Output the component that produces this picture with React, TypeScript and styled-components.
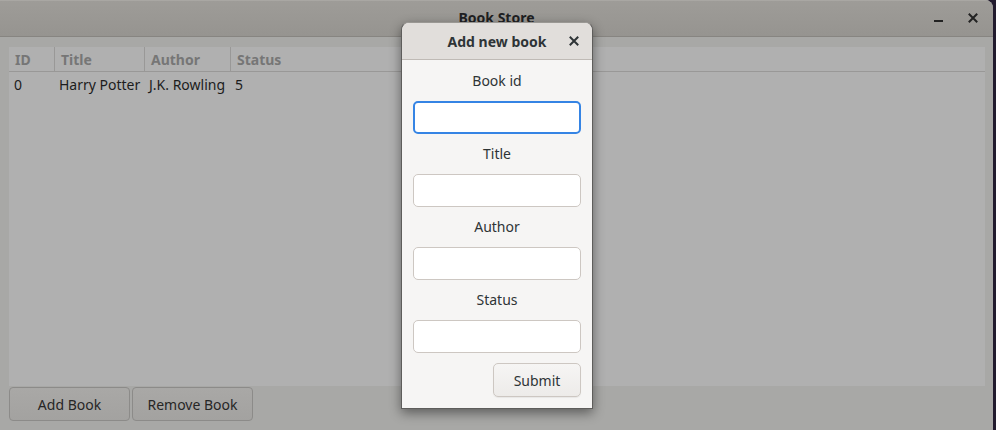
import React from "react";
import styled, { createGlobalStyle } from "styled-components";

const GlobalStyle = createGlobalStyle`
  html, body { margin: 0; padding: 0; }
  body {
    background: #221b2e;
    font-family: "Noto Sans", "Open Sans", sans-serif;
    font-size: 14px;
    overflow: hidden;
  }
`;

const Screen = styled.div`
  position: relative;
  width: 996px;
  height: 430px;
  overflow: hidden;
`;

const Win = styled.div`
  width: 993px;
  height: 430px;
  background: #a8a8a6;
  border-top-right-radius: 8px;
  display: flex;
  flex-direction: column;
  overflow: hidden;
`;

const HeaderBar = styled.div`
  height: 36px;
  flex: none;
  display: flex;
  align-items: center;
  background: linear-gradient(#9e9c98, #969490);
  border-bottom: 1px solid #878581;
  box-shadow: inset 0 1px 0 #a9a7a3;
`;

const Side = styled.div<{ $end?: boolean }>`
  flex: 1;
  display: flex;
  justify-content: ${(p) => (p.$end ? "flex-end" : "flex-start")};
  align-items: center;
  gap: 18px;
  padding-right: 12px;
`;

const WinTitle = styled.div`
  font-weight: bold;
  color: #1e2022;
  font-size: 14px;
  margin-top: -2px;
`;

const CtrlBtn = styled.div`
  width: 16px;
  height: 16px;
  display: flex;
  align-items: center;
  justify-content: center;
`;

const Content = styled.div`
  flex: 1;
  display: flex;
  flex-direction: column;
  padding: 10px 8px 0 9px;
`;

const Table = styled.div`
  height: 339px;
  background: #b0b0b0;
  display: flex;
  flex-direction: column;
`;

const HeadRow = styled.div`
  height: 24px;
  display: flex;
  border-bottom: 1px solid #999897;
`;

const HeadCell = styled.div<{ $w?: number; $first?: boolean }>`
  ${(p) => (p.$w ? `width: ${p.$w}px;` : "flex: 1;")}
  box-sizing: border-box;
  border-left: ${(p) => (p.$first ? "none" : "1px solid #999897")};
  padding-left: 6px;
  display: flex;
  align-items: center;
  font-weight: bold;
  color: #767676;
`;

const Row = styled.div`
  height: 24px;
  display: flex;
`;

const Cell = styled.div<{ $w?: number }>`
  ${(p) => (p.$w ? `width: ${p.$w}px;` : "flex: 1;")}
  box-sizing: border-box;
  padding-left: 5px;
  display: flex;
  align-items: center;
  color: #1c1c1c;
  white-space: nowrap;
`;

const ButtonRow = styled.div`
  display: flex;
  gap: 2px;
  margin-top: 1px;
`;

const WinButton = styled.div`
  width: 121px;
  height: 34px;
  box-sizing: border-box;
  border: 1px solid #8c8b89;
  border-radius: 4px;
  background: linear-gradient(#a9a8a6, #a3a2a0);
  display: flex;
  align-items: center;
  justify-content: center;
  color: #262626;
`;

const Dialog = styled.div`
  position: absolute;
  left: 401px;
  top: 22px;
  width: 192px;
  height: 387px;
  box-sizing: border-box;
  border: 1px solid #5e5d5b;
  border-top-color: #9a9894;
  border-radius: 8px 8px 0 0;
  background: #f6f5f4;
  box-shadow: 0 4px 12px rgba(0, 0, 0, 0.45);
  display: flex;
  flex-direction: column;
  overflow: hidden;
`;

const DlgHeader = styled.div`
  height: 36px;
  flex: none;
  background: #e1dedb;
  border-bottom: 1px solid #bfbab5;
  display: flex;
  align-items: center;
  justify-content: center;
  position: relative;
`;

const DlgTitle = styled.div`
  font-weight: bold;
  color: #2e3436;
`;

const DlgClose = styled.div`
  position: absolute;
  right: 13px;
  top: 13px;
  width: 10px;
  height: 10px;
  display: flex;
`;

const DlgBody = styled.div`
  flex: 1;
  display: flex;
  flex-direction: column;
  align-items: stretch;
  gap: 10px;
  padding: 11px 11px 0 11px;
`;

const Label = styled.div`
  height: 20px;
  line-height: 20px;
  text-align: center;
  color: #2e3436;
`;

const Input = styled.div<{ $focus?: boolean }>`
  height: 33px;
  box-sizing: border-box;
  background: #fff;
  border-radius: 5px;
  border: ${(p) => (p.$focus ? "2px solid #3584e4" : "1px solid #cdc7c2")};
`;

const SubmitRow = styled.div`
  display: flex;
  justify-content: flex-end;
`;

const Submit = styled.div`
  width: 88px;
  height: 34px;
  box-sizing: border-box;
  border: 1px solid #cdc7c2;
  border-radius: 5px;
  background: linear-gradient(#f6f5f4, #edebe9);
  box-shadow: 0 1px 1px rgba(0, 0, 0, 0.06);
  display: flex;
  align-items: center;
  justify-content: center;
  color: #2e3436;
`;

const CloseIcon = ({ color }: { color: string }) => (
  <svg width="10" height="10" viewBox="0 0 10 10">
    <path d="M1.5 1.5 L8.5 8.5 M8.5 1.5 L1.5 8.5" stroke={color} strokeWidth="2" strokeLinecap="square" />
  </svg>
);

const MinIcon = () => (
  <svg width="12" height="12" viewBox="0 0 12 12">
    <rect x="1" y="8" width="9" height="2" fill="#222" />
  </svg>
);

const fields = ["Book id", "Title", "Author", "Status"];

export default function App() {
  return (
    <>
      <GlobalStyle />
      <Screen>
        <Win>
          <HeaderBar>
            <Side />
            <WinTitle>Book Store</WinTitle>
            <Side $end>
              <CtrlBtn>
                <MinIcon />
              </CtrlBtn>
              <CtrlBtn>
                <CloseIcon color="#222" />
              </CtrlBtn>
            </Side>
          </HeaderBar>
          <Content>
            <Table>
              <HeadRow>
                <HeadCell $w={45} $first>ID</HeadCell>
                <HeadCell $w={90}>Title</HeadCell>
                <HeadCell $w={86}>Author</HeadCell>
                <HeadCell>Status</HeadCell>
              </HeadRow>
              <Row>
                <Cell $w={45}>0</Cell>
                <Cell $w={90}>Harry Potter</Cell>
                <Cell $w={86}>J.K. Rowling</Cell>
                <Cell>5</Cell>
              </Row>
            </Table>
            <ButtonRow>
              <WinButton>Add Book</WinButton>
              <WinButton>Remove Book</WinButton>
            </ButtonRow>
          </Content>
        </Win>
        <Dialog>
          <DlgHeader>
            <DlgTitle>Add new book</DlgTitle>
            <DlgClose>
              <CloseIcon color="#2e3436" />
            </DlgClose>
          </DlgHeader>
          <DlgBody>
            {fields.map((f, i) => (
              <React.Fragment key={f}>
                <Label>{f}</Label>
                <Input $focus={i === 0} />
              </React.Fragment>
            ))}
            <SubmitRow>
              <Submit>Submit</Submit>
            </SubmitRow>
          </DlgBody>
        </Dialog>
      </Screen>
    </>
  );
}
